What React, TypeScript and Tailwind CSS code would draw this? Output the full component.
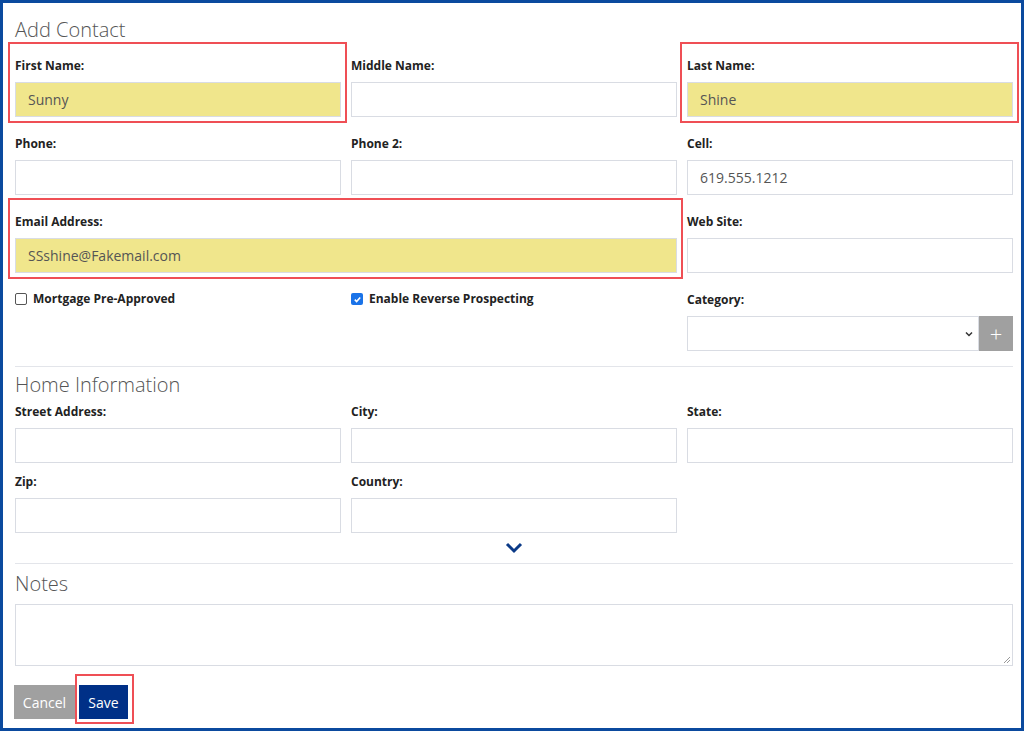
import React from "react";

const F = { fontFamily: '"Open Sans", "Noto Sans", sans-serif' };

function Field({ label, value, hl, hlBox, span2 }: { label: string; value?: string; hl?: boolean; hlBox?: boolean; span2?: boolean }) {
  return (
    <div className={`relative flex flex-col ${span2 ? "col-span-2" : ""}`}>
      {hlBox && <div className="absolute -left-[7px] -right-[6px] -top-[11px] -bottom-[6px] border-2 border-[#ef4f55] pointer-events-none" />}
      <div className="h-[29px] text-[12px] font-bold text-[#222] leading-[25px]">{label}</div>
      <div className={`h-[35px] border border-[#d9dce3] flex items-center px-3 text-[14px] text-[#555] ${hl ? "bg-[#f0e68c]" : "bg-white"}`}>{value}</div>
    </div>
  );
}

function Cb({ label, checked }: { label: string; checked?: boolean }) {
  return (
    <div className="flex items-center gap-[6px] h-[16px] text-[12px] font-bold text-[#222] mt-[4px]">
      {checked ? (
        <span className="w-[12px] h-[12px] rounded-[2px] bg-[#1a73e8] flex items-center justify-center">
          <svg width="9" height="9" viewBox="0 0 10 10"><path d="M2 5.2l2 2 4-4.4" stroke="white" strokeWidth="1.8" fill="none" /></svg>
        </span>
      ) : (
        <span className="w-[12px] h-[12px] rounded-[2px] border border-[#555] bg-white" />
      )}
      {label}
    </div>
  );
}

export default function App() {
  return (
    <div style={F} className="w-[1024px] h-[731px] border-[3px] border-[#0b4a9e] bg-white pl-[12px] pr-[8px] overflow-hidden">
      <div className="h-[50px] flex items-center pt-[3px] text-[20px] font-light text-[#555]">Add Contact</div>
      <div className="grid grid-cols-3 gap-x-[10px] gap-y-[14px]">
        <Field label="First Name:" value="Sunny" hl hlBox />
        <Field label="Middle Name:" />
        <Field label="Last Name:" value="Shine" hl hlBox />
        <Field label="Phone:" />
        <Field label="Phone 2:" />
        <Field label="Cell:" value="619.555.1212" />
        <Field label="Email Address:" value="SSshine@Fakemail.com" hl hlBox span2 />
        <Field label="Web Site:" />
        <div><Cb label="Mortgage Pre-Approved" /></div>
        <div><Cb label="Enable Reverse Prospecting" checked /></div>
        <div className="flex flex-col">
          <div className="h-[29px] text-[12px] font-bold text-[#222] leading-[25px]">Category:</div>
          <div className="flex h-[35px]">
            <div className="flex-1 border border-[#d9dce3] flex items-center justify-end pr-[4px]">
              <svg width="10" height="10" viewBox="0 0 10 10"><path d="M2 3.5l3 3 3-3" stroke="#333" strokeWidth="1.5" fill="none" /></svg>
            </div>
            <div className="w-[34px] bg-[#a0a0a0] text-white flex items-center justify-center text-[22px] font-light">+</div>
          </div>
        </div>
      </div>
      <div className="border-t border-[#e3e5ea] mt-[15px]" />
      <div className="h-[34px] flex items-center text-[20px] font-light text-[#555] pt-[2px]">Home Information</div>
      <div className="grid grid-cols-3 gap-x-[10px] gap-y-[6px] -mt-[2px]">
        <Field label="Street Address:" />
        <Field label="City:" />
        <Field label="State:" />
        <Field label="Zip:" />
        <Field label="Country:" />
      </div>
      <div className="flex justify-center h-[30px] items-center">
        <svg width="18" height="12" viewBox="0 0 18 12"><path d="M2 2l7 7 7-7" stroke="#0b3a87" strokeWidth="3" fill="none" /></svg>
      </div>
      <div className="border-t border-[#e3e5ea]" />
      <div className="h-[40px] flex items-center text-[20px] font-light text-[#555]">Notes</div>
      <div className="h-[62px] border border-[#d9dce3] relative">
        <svg className="absolute right-[1px] bottom-[1px]" width="8" height="8" viewBox="0 0 8 8"><path d="M7 1L1 7M7 4L4 7" stroke="#999" strokeWidth="1" /></svg>
      </div>
      <div className="flex mt-[19px] h-[34px] gap-[4px] -ml-[1px]">
        <div className="w-[61px] bg-[#a0a0a0] text-white text-[14px] flex items-center justify-center">Cancel</div>
        <div className="relative w-[49px] bg-[#003087] text-white text-[14px] flex items-center justify-center">
          Save
          <div className="absolute -left-[4px] -right-[6px] -top-[11px] -bottom-[5px] border-2 border-[#ef4f55]" />
        </div>
      </div>
    </div>
  );
}
